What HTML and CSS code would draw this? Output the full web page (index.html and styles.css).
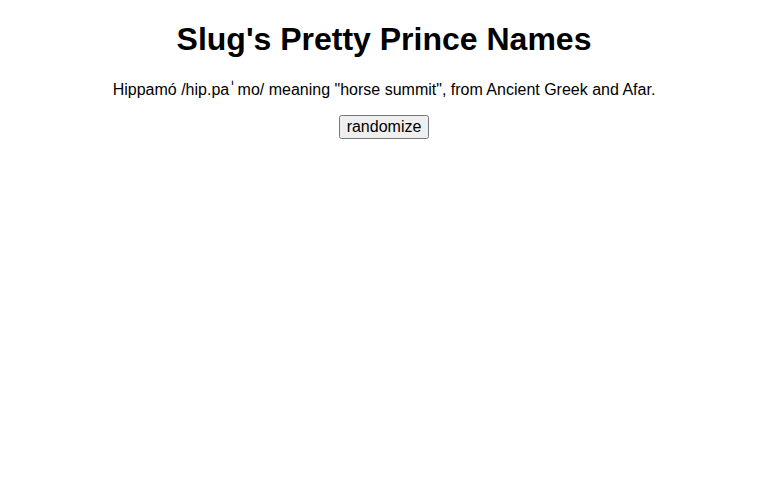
FILE: index.html
```html
<!doctype html>
<html lang="en">
  <head>
    <meta charset="UTF-8" />
    <meta name="viewport" content="width=device-width, initial-scale=1.0" />
    <title>Slug's Pretty Prince Names</title>
    <link rel="stylesheet" href="styles.css">
  </head>
  <body>
    <main class="namer">
      <h1>Slug's Pretty Prince Names</h1>
      <p id="name-line" class="name-line">
        Hippamó /hip.pa<span class="ipa">ˈ</span>mo/ meaning "horse summit", from Ancient Greek and Afar.
      </p>
      <button id="randomize" class="randomize">randomize</button>
    </main>
  </body>
</html>
```

FILE: styles.css
```css
body {
  font-family: "Liberation Sans", Arial, sans-serif;
  color: #000;
  background: #fff;
  margin: 0 8px;
}

.namer {
  text-align: center;
}

h1 {
  font-size: 2em;
}

.name-line {
  font-size: 16px;
}

/* stress mark sits high with a little room on each side */
.ipa {
  font-family: "DejaVu Sans", sans-serif;
  padding: 0 3px 0 1px;
  position: relative;
  top: -2px;
}

.randomize {
  font-family: inherit;
  font-size: 16px;
}
```
